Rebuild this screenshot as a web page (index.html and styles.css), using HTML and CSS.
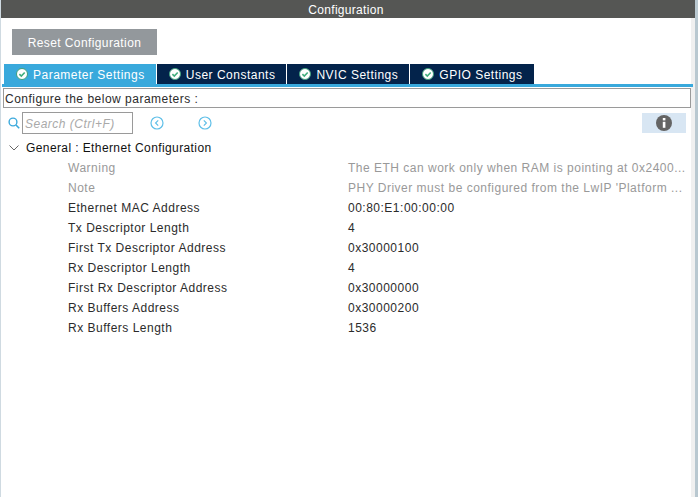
FILE: index.html
```html
<!DOCTYPE html>
<html lang="en">
<head>
    <meta charset="UTF-8">
    <title>Configuration</title>
    <link rel="stylesheet" href="styles.css">
</head>
<body>
    <div class="title-bar">Configuration</div>
    <div class="panel">
        <div class="reset-row">
            <button class="reset-btn">Reset Configuration</button>
        </div>
        <div class="tabs">
            <div class="tab active"><svg class="check" viewBox="0 0 12 12"><circle cx="6" cy="6" r="5.5" fill="#fff" stroke="#3f9e7c"/><path d="M3.4 6.1 5.3 8 8.7 4.5" fill="none" stroke="#3fae7c" stroke-width="1.6"/></svg>Parameter Settings</div>
            <div class="tab"><svg class="check" viewBox="0 0 12 12"><circle cx="6" cy="6" r="5.5" fill="#fff" stroke="#3f9e7c"/><path d="M3.4 6.1 5.3 8 8.7 4.5" fill="none" stroke="#3fae7c" stroke-width="1.6"/></svg>User Constants</div>
            <div class="tab"><svg class="check" viewBox="0 0 12 12"><circle cx="6" cy="6" r="5.5" fill="#fff" stroke="#3f9e7c"/><path d="M3.4 6.1 5.3 8 8.7 4.5" fill="none" stroke="#3fae7c" stroke-width="1.6"/></svg>NVIC Settings</div>
            <div class="tab"><svg class="check" viewBox="0 0 12 12"><circle cx="6" cy="6" r="5.5" fill="#fff" stroke="#3f9e7c"/><path d="M3.4 6.1 5.3 8 8.7 4.5" fill="none" stroke="#3fae7c" stroke-width="1.6"/></svg>GPIO Settings</div>
        </div>
        <div class="tab-line"></div>
        <div class="configure-box">Configure the below parameters :</div>
        <div class="toolbar">
            <svg class="search-icon" viewBox="0 0 12 12"><circle cx="5" cy="5" r="3.9" fill="none" stroke="#3ba9dc" stroke-width="1.4"/><path d="M8 8l3.2 3.2" stroke="#3ba9dc" stroke-width="1.6"/></svg>
            <div class="search-box">Search (Ctrl+F)</div>
            <svg class="nav-icon prev" viewBox="0 0 14 14"><circle cx="7" cy="7" r="6" fill="none" stroke="#5fbfe8" stroke-width="1.2"/><path d="M8.2 4.4 5.6 7l2.6 2.6" fill="none" stroke="#5fbfe8" stroke-width="1.2"/></svg>
            <svg class="nav-icon next" viewBox="0 0 14 14"><circle cx="7" cy="7" r="6" fill="none" stroke="#5fbfe8" stroke-width="1.2"/><path d="M5.8 4.4 8.4 7l-2.6 2.6" fill="none" stroke="#5fbfe8" stroke-width="1.2"/></svg>
            <div class="info-btn"><svg viewBox="0 0 16 16"><circle cx="8" cy="8" r="8" fill="#646464"/><rect x="6.8" y="6.8" width="2.6" height="6" fill="#fff"/><rect x="6.8" y="3" width="2.6" height="2.4" fill="#fff"/></svg></div>
        </div>
        <div class="group"><svg class="chevron" viewBox="0 0 10 6"><path d="M.5.5 5 5 9.5.5" fill="none" stroke="#666" stroke-width="1"/></svg>General : Ethernet Configuration</div>
        <div class="params">
            <div class="param muted"><span class="name">Warning</span><span class="value">The ETH can work only when RAM is pointing at 0x2400...</span></div>
            <div class="param muted"><span class="name">Note</span><span class="value">PHY Driver must be configured from the LwIP 'Platform ...</span></div>
            <div class="param"><span class="name">Ethernet MAC Address</span><span class="value">00:80:E1:00:00:00</span></div>
            <div class="param"><span class="name">Tx Descriptor Length</span><span class="value">4</span></div>
            <div class="param"><span class="name">First Tx Descriptor Address</span><span class="value">0x30000100</span></div>
            <div class="param"><span class="name">Rx Descriptor Length</span><span class="value">4</span></div>
            <div class="param"><span class="name">First Rx Descriptor Address</span><span class="value">0x30000000</span></div>
            <div class="param"><span class="name">Rx Buffers Address</span><span class="value">0x30000200</span></div>
            <div class="param"><span class="name">Rx Buffers Length</span><span class="value">1536</span></div>
        </div>
    </div>
</body>
</html>
```
FILE: styles.css
```css
html, body {
    margin: 0;
    padding: 0;
}
body {
    box-sizing: border-box;
    width: 698px;
    height: 497px;
    overflow: hidden;
    background: #fff;
    border-left: 1px solid #cfdae1;
    border-right: 3px solid #b9c8d0;
    font-family: "Liberation Sans", Arial, sans-serif;
    font-size: 12px;
    letter-spacing: 0.5px;
    color: #2b2b2b;
    display: flex;
    flex-direction: column;
}
.title-bar {
    flex: none;
    height: 18px;
    line-height: 20px;
    padding-right: 4px;
    background: #555654;
    color: #fff;
    text-align: center;
    letter-spacing: 0.3px;
}
.panel {
    flex: 1;
    border-right: 4px solid #f0f0f0;
}
.reset-row {
    padding: 11px 0 0 11px;
}
.reset-btn {
    display: block;
    width: 145px;
    height: 26px;
    border: 0;
    padding: 1px 0 0;
    background: #93989c;
    color: #fff;
    font: inherit;
    letter-spacing: 0.4px;
}
.tabs {
    display: flex;
    margin: 9px 0 0 3px;
}
.tab {
    box-sizing: border-box;
    height: 20px;
    background: #03234b;
    color: #fff;
    display: flex;
    align-items: center;
    padding: 1px 11px 0 12px;
    margin-right: 1px;
}
.tab.active {
    background: #39a9dc;
}
.check {
    width: 12px;
    height: 12px;
    margin: -1px 5px 0 0;
}
.tab-line {
    height: 3px;
    margin: 0 -2px 0 1px;
    background: #39a9dc;
}
.configure-box {
    height: 18px;
    line-height: 20px;
    margin: 1px 0 0 2px;
    padding-left: 1px;
    border: 1px solid #9a9a9a;
    white-space: nowrap;
}
.toolbar {
    display: flex;
    align-items: center;
    height: 24px;
    margin-top: 3px;
}
.search-icon {
    width: 12px;
    height: 12px;
    margin-left: 7px;
}
.search-box {
    box-sizing: border-box;
    width: 111px;
    height: 22px;
    line-height: 22px;
    margin-left: 2px;
    padding-left: 2px;
    border: 1px solid #9a9a9a;
    color: #a9a9a9;
    font-style: italic;
}
.nav-icon {
    width: 14px;
    height: 14px;
}
.nav-icon.prev {
    margin-left: 17px;
}
.nav-icon.next {
    margin-left: 34px;
}
.info-btn {
    width: 44px;
    height: 20px;
    margin-left: auto;
    margin-right: 5px;
    background: #d8e6f3;
    display: flex;
    align-items: center;
    justify-content: center;
}
.info-btn svg {
    width: 16px;
    height: 16px;
}
.group {
    box-sizing: border-box;
    display: flex;
    align-items: center;
    height: 20px;
    padding-top: 2px;
    margin-top: 2px;
    color: #111;
    letter-spacing: 0.4px;
}
.chevron {
    width: 10px;
    height: 6px;
    margin: 0 7px 0 8px;
}
.param {
    display: flex;
    height: 20px;
    line-height: 22px;
    padding-left: 67px;
}
.param.muted {
    color: #999;
}
.name {
    width: 280px;
}
.value {
    white-space: nowrap;
}
```
